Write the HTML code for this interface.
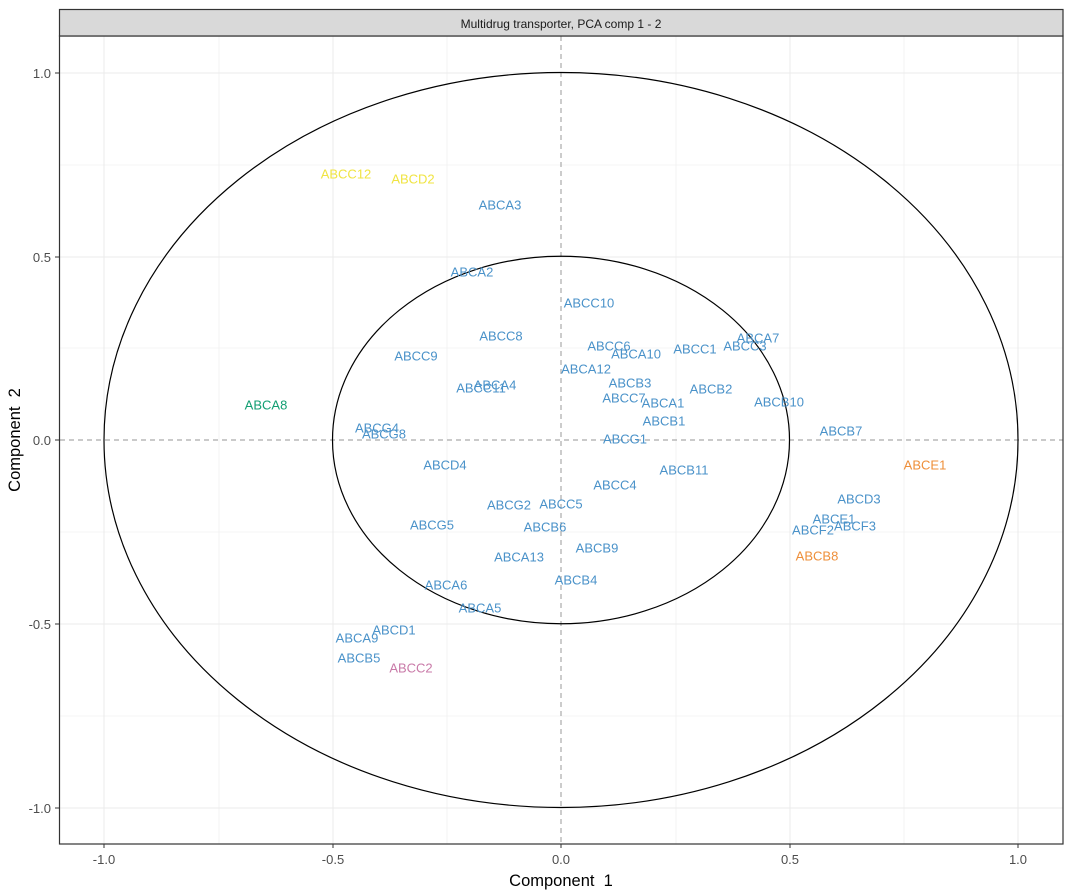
<!DOCTYPE html>
<html><head><meta charset="utf-8"><style>html,body{margin:0;padding:0;background:#fff}svg{display:block}</style></head>
<body>
<svg width="1072" height="894" xmlns="http://www.w3.org/2000/svg" font-family="Liberation Sans, sans-serif">
<rect width="1072" height="894" fill="#fff"/>
<g stroke="#ebebeb" stroke-width="1">
<line x1="104" y1="36" x2="104" y2="844"/><line x1="219" y1="36" x2="219" y2="844" stroke-width="0.6"/>
<line x1="333" y1="36" x2="333" y2="844"/><line x1="447" y1="36" x2="447" y2="844" stroke-width="0.6"/>
<line x1="676" y1="36" x2="676" y2="844" stroke-width="0.6"/><line x1="790" y1="36" x2="790" y2="844"/>
<line x1="904" y1="36" x2="904" y2="844" stroke-width="0.6"/><line x1="1018" y1="36" x2="1018" y2="844"/>
<line x1="60" y1="73" x2="1063" y2="73"/><line x1="60" y1="165" x2="1063" y2="165" stroke-width="0.6"/>
<line x1="60" y1="257" x2="1063" y2="257"/><line x1="60" y1="348" x2="1063" y2="348" stroke-width="0.6"/>
<line x1="60" y1="532" x2="1063" y2="532" stroke-width="0.6"/><line x1="60" y1="624" x2="1063" y2="624"/>
<line x1="60" y1="716" x2="1063" y2="716" stroke-width="0.6"/><line x1="60" y1="808" x2="1063" y2="808"/>
</g>
<g stroke="#aaa" stroke-dasharray="5,4" stroke-width="1.2">
<line x1="561" y1="36" x2="561" y2="844"/><line x1="60" y1="440" x2="1063" y2="440"/>
</g>
<ellipse cx="561" cy="440" rx="457" ry="367.5" fill="none" stroke="#000" stroke-width="1.2"/>
<ellipse cx="561" cy="440" rx="228.5" ry="183.75" fill="none" stroke="#000" stroke-width="1.2"/>
<rect x="59.5" y="36" width="1003.5" height="808" fill="none" stroke="#333" stroke-width="1.2"/>
<rect x="59.5" y="9.5" width="1003.5" height="26.5" fill="#d9d9d9" stroke="#333" stroke-width="1.2"/>
<text x="561" y="28" font-size="12" text-anchor="middle" fill="#1a1a1a">Multidrug transporter, PCA comp 1 - 2</text>
<g stroke="#333"><line x1="55" y1="73" x2="59" y2="73"/><line x1="55" y1="257" x2="59" y2="257"/><line x1="55" y1="440" x2="59" y2="440"/><line x1="55" y1="624" x2="59" y2="624"/><line x1="55" y1="808" x2="59" y2="808"/>
<line x1="104" y1="844" x2="104" y2="848"/><line x1="333" y1="844" x2="333" y2="848"/><line x1="561" y1="844" x2="561" y2="848"/><line x1="790" y1="844" x2="790" y2="848"/><line x1="1018" y1="844" x2="1018" y2="848"/></g>
<g font-size="13" fill="#4d4d4d" text-anchor="end"><text x="51" y="78">1.0</text><text x="51" y="262">0.5</text><text x="51" y="445">0.0</text><text x="51" y="629">-0.5</text><text x="51" y="813">-1.0</text></g>
<g font-size="13" fill="#4d4d4d" text-anchor="middle"><text x="104" y="864">-1.0</text><text x="333" y="864">-0.5</text><text x="561" y="864">0.0</text><text x="790" y="864">0.5</text><text x="1018" y="864">1.0</text></g>
<text x="561" y="886" font-size="16.5" text-anchor="middle">Component &#160;1</text>
<text transform="translate(20,440) rotate(-90)" font-size="16.5" text-anchor="middle">Component &#160;2</text>
<g font-size="13" text-anchor="middle" dominant-baseline="central" fill="#4a92c9">
<text x="346" y="174" fill="#f0e442">ABCC12</text><text x="413" y="179" fill="#f0e442">ABCD2</text>
<text x="500" y="205">ABCA3</text><text x="472" y="272">ABCA2</text><text x="589" y="303">ABCC10</text>
<text x="501" y="336">ABCC8</text><text x="416" y="356">ABCC9</text><text x="609" y="346">ABCC6</text>
<text x="636" y="354">ABCA10</text><text x="695" y="349">ABCC1</text><text x="758" y="338">ABCA7</text>
<text x="745" y="346">ABCC3</text><text x="586" y="369">ABCA12</text><text x="630" y="383">ABCB3</text>
<text x="495" y="385">ABCA4</text><text x="481" y="388">ABCC11</text><text x="711" y="389">ABCB2</text>
<text x="624" y="398">ABCC7</text><text x="663" y="403">ABCA1</text><text x="779" y="402">ABCB10</text>
<text x="266" y="405" fill="#129e72">ABCA8</text><text x="664" y="421">ABCB1</text><text x="377" y="428">ABCG4</text>
<text x="384" y="434">ABCG8</text><text x="841" y="431">ABCB7</text><text x="625" y="439">ABCG1</text>
<text x="925" y="465" fill="#ee8f3a">ABCE1</text><text x="445" y="465">ABCD4</text><text x="684" y="470">ABCB11</text>
<text x="615" y="485">ABCC4</text><text x="859" y="499">ABCD3</text><text x="509" y="505">ABCG2</text>
<text x="561" y="504">ABCC5</text><text x="834" y="519">ABCE1</text><text x="855" y="526">ABCF3</text>
<text x="432" y="525">ABCG5</text><text x="545" y="527">ABCB6</text><text x="813" y="530">ABCF2</text>
<text x="597" y="548">ABCB9</text><text x="519" y="557">ABCA13</text><text x="817" y="556" fill="#ee8f3a">ABCB8</text>
<text x="576" y="580">ABCB4</text><text x="446" y="585">ABCA6</text><text x="480" y="608">ABCA5</text>
<text x="394" y="630">ABCD1</text><text x="357" y="638">ABCA9</text><text x="359" y="658">ABCB5</text>
<text x="411" y="668" fill="#c97aa8">ABCC2</text>
</g>
</svg>
</body></html>
